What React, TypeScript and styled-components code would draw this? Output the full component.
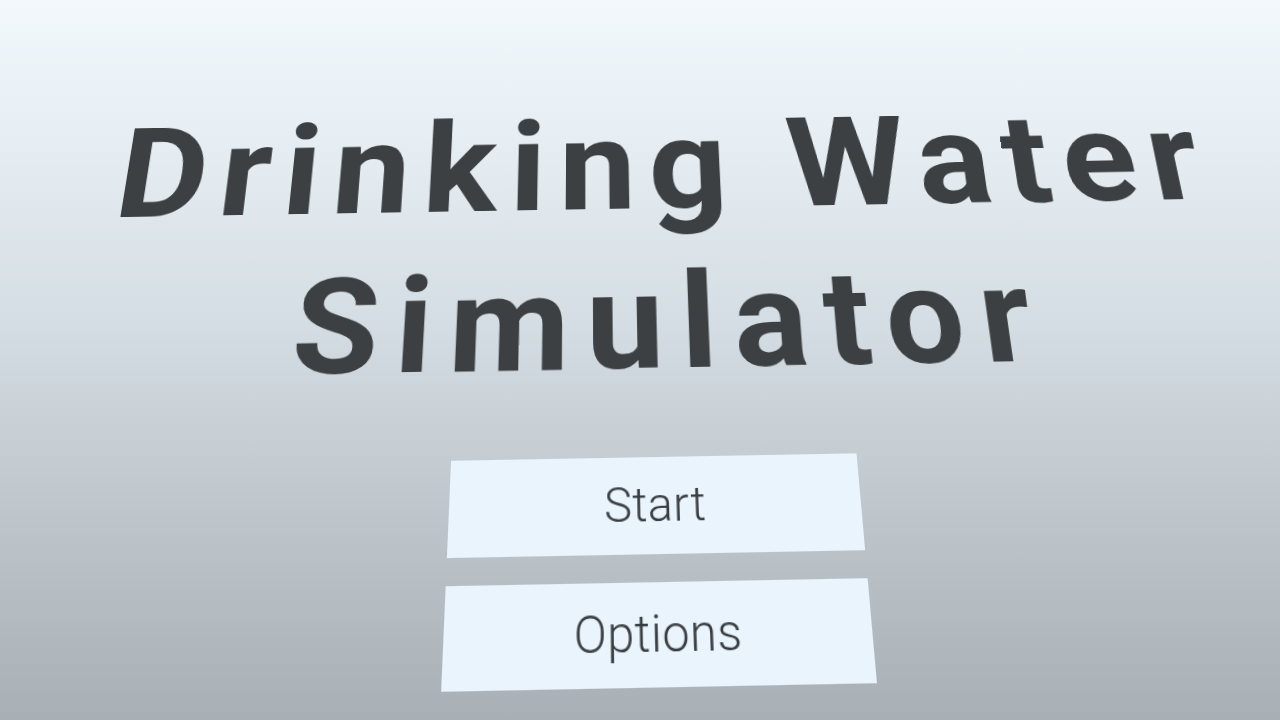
import React from "react";
import styled, { createGlobalStyle } from "styled-components";

const GlobalStyle = createGlobalStyle`
  html, body {
    margin: 0;
    padding: 0;
    width: 100%;
    height: 100%;
    overflow: hidden;
  }
  body {
    font-family: Roboto, "Liberation Sans", sans-serif;
  }
`;

/* Sky-like backdrop of the VR menu room */
const Scene = styled.main`
  width: 1280px;
  height: 720px;
  background: linear-gradient(
    to bottom,
    #f2f8fc 0%,
    #e7eff4 18%,
    #d4dde3 45%,
    #bfc7cd 70%,
    #a8b0b5 100%
  );
  perspective: 1000px;
  perspective-origin: 50% 40%;
  overflow: hidden;
`;

/* The floating menu panel, tilted away from the viewer */
const Panel = styled.div`
  width: 1280px;
  height: 720px;
  box-sizing: border-box;
  padding-top: 76px;
  display: flex;
  flex-direction: column;
  align-items: center;
  transform-origin: 50% 45%;
  transform: translateX(11px) rotateX(19deg) rotateZ(-1.05deg);
`;

const Title = styled.h1`
  margin: 0;
  padding-left: 40px;
  display: flex;
  flex-direction: column;
  align-items: center;
  color: #3c4043;
  font-family: Roboto, "Liberation Sans", sans-serif;
  font-weight: 700;
  line-height: 1;
`;

const TitleLine = styled.span<{ $size: number; $spacing: number; $gap?: number }>`
  display: block;
  margin-top: ${(p) => p.$gap ?? 0}px;
  font-size: ${(p) => p.$size}px;
  letter-spacing: ${(p) => p.$spacing}em;
  line-height: 1;
  white-space: nowrap;
`;

const Menu = styled.nav`
  margin-top: 66px;
  display: flex;
  flex-direction: column;
  align-items: center;
  gap: 25px;
`;

const MenuButton = styled.button`
  width: 388px;
  height: 90px;
  border: none;
  border-radius: 0;
  background: #e9f4fc;
  color: #3a3d40;
  font-family: Roboto, "Liberation Sans", sans-serif;
  font-weight: 300;
  font-size: 44px;
  letter-spacing: 0.01em;
  display: flex;
  align-items: center;
  justify-content: center;
  padding: 0;
  cursor: pointer;
`;

export default function App() {
  return (
    <>
      <GlobalStyle />
      <Scene>
        <Panel>
          <Title>
            <TitleLine $size={145} $spacing={0.093}>
              Drinking Water
            </TitleLine>
            <TitleLine $size={139} $spacing={0.118} $gap={31}>
              Simulator
            </TitleLine>
          </Title>
          <Menu>
            <MenuButton>Start</MenuButton>
            <MenuButton>Options</MenuButton>
          </Menu>
        </Panel>
      </Scene>
    </>
  );
}
